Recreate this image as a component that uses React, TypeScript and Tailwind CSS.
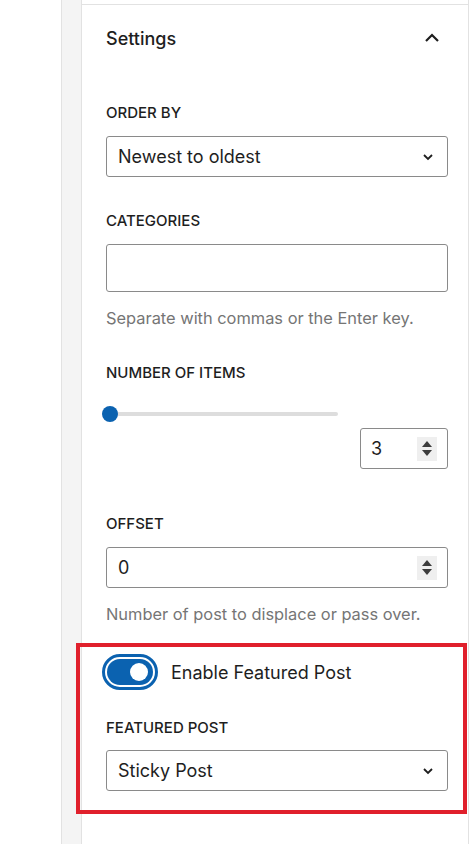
import React from "react";

function ChevronDown() {
  return (
    <svg width="12" height="8" viewBox="0 0 12 8" fill="none" className="shrink-0">
      <path d="M2 2l4 4 4-4" stroke="#1e1e1e" strokeWidth="1.8" />
    </svg>
  );
}

function Spinner() {
  return (
    <div className="flex h-[24px] w-[20px] flex-col items-center justify-center gap-[3px] bg-[#efefef]">
      <svg width="10" height="6" viewBox="0 0 10 6">
        <path d="M0 6L5 0l5 6z" fill="#3c3c3c" />
      </svg>
      <svg width="10" height="6" viewBox="0 0 10 6">
        <path d="M0 0l5 6 5-6z" fill="#3c3c3c" />
      </svg>
    </div>
  );
}

function Label({ children }: { children: React.ReactNode }) {
  return (
    <div className="text-[15px] font-medium uppercase leading-[20px] text-[#1e1e1e]">
      {children}
    </div>
  );
}

function Select({ value }: { value: string }) {
  return (
    <div className="flex h-[41px] items-center justify-between rounded-[3px] border border-[#8a8a8a] pl-[11px] pr-[13px]">
      <span className="text-[18px] text-[#1e1e1e]">{value}</span>
      <ChevronDown />
    </div>
  );
}

function Help({ children }: { children: React.ReactNode }) {
  return <p className="mt-[15px] text-[16.4px] leading-[22px] text-[#757575]">{children}</p>;
}

export default function App() {
  return (
    <div className="flex min-h-screen bg-white font-['Inter',sans-serif] text-[#1e1e1e]">
      <div className="w-[61px] shrink-0" />
      <div className="w-[21px] shrink-0 border-x border-[#e2e2e2] bg-[#f4f4f4]" />
      <div className="flex w-[387px] shrink-0 flex-col border-r border-[#e2e2e2] pt-[4px]">
        <div className="border-t border-[#e2e2e2]">
          <div className="flex h-[66px] items-center justify-between pl-6 pr-[28px]">
            <h2 className="text-[18px] font-medium">Settings</h2>
            <svg width="16" height="10" viewBox="0 0 16 10" fill="none">
              <path d="M2 8l6-6 6 6" stroke="#1e1e1e" strokeWidth="2.2" />
            </svg>
          </div>

          <div className="pl-6 pr-5">
            <div className="mt-[32px]">
              <Label>Order by</Label>
              <div className="mt-[13px]">
                <Select value="Newest to oldest" />
              </div>
            </div>

            <div className="mt-[34px]">
              <Label>Categories</Label>
              <div className="mt-[13px] h-[48px] rounded-[3px] border border-[#8a8a8a]" />
              <Help>Separate with commas or the Enter key.</Help>
            </div>

            <div className="mt-[34px]">
              <Label>Number of items</Label>
              <div className="relative mt-[23px] h-[16px] w-[232px]">
                <div className="absolute left-[4px] right-0 top-[6px] h-[4px] rounded-full bg-[#dddddd]" />
                <div className="absolute left-[-4px] top-0 h-[16px] w-[16px] rounded-full bg-[#0b62b0]" />
              </div>
              <div className="mt-[6px] flex justify-end">
                <div className="flex h-[41px] w-[88px] items-center justify-between rounded-[3px] border border-[#8a8a8a] pl-[10px] pr-[10px]">
                  <span className="text-[18px]">3</span>
                  <Spinner />
                </div>
              </div>
            </div>

            <div className="mt-[45px]">
              <Label>Offset</Label>
              <div className="mt-[13px] flex h-[41px] items-center justify-between rounded-[3px] border border-[#8a8a8a] pl-[11px] pr-[10px]">
                <span className="text-[18px]">0</span>
                <Spinner />
              </div>
              <Help>Number of post to displace or pass over.</Help>
            </div>

            <div className="-ml-[30px] -mr-[19px] mt-[18px] border-4 border-[#e0202c] pb-[19px] pl-[26px] pr-[15px] pt-[7px]">
              <div className="flex items-center gap-[13px]">
                <div className="-ml-[4px] rounded-full border-[3px] border-[#0b62b0] p-[2px]">
                  <div className="flex h-[26px] w-[46px] items-center justify-end rounded-full bg-[#0b62b0] pr-[5px]">
                    <div className="h-[18px] w-[18px] rounded-full bg-white" />
                  </div>
                </div>
                <span className="text-[18px]">Enable Featured Post</span>
              </div>
              <div className="mt-[28px]">
                <Label>Featured post</Label>
                <div className="mt-[12px]">
                  <Select value="Sticky Post" />
                </div>
              </div>
            </div>
          </div>
        </div>
      </div>
    </div>
  );
}
